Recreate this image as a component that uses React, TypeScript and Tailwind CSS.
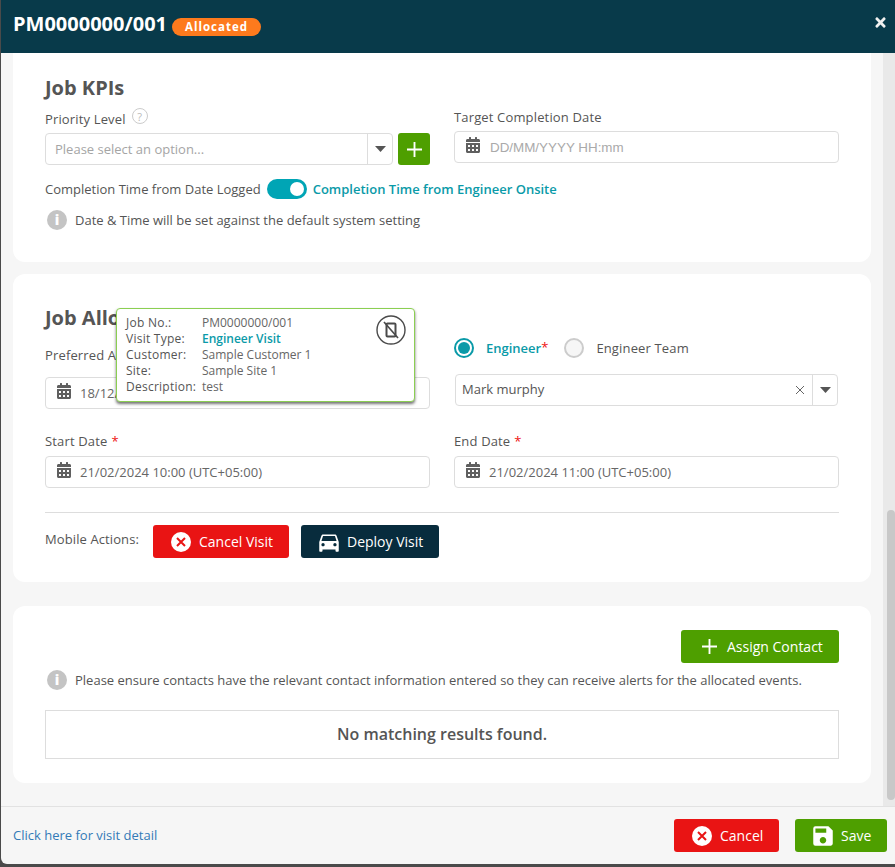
import { FaCalendarAlt, FaTimes } from 'react-icons/fa';
import { MdDirectionsCar, MdSave } from 'react-icons/md';

const Caret = () => (
  <svg width="11" height="6" viewBox="0 0 11 6">
    <polygon points="0,0 11,0 5.5,6" fill="#555555" />
  </svg>
);

const InfoIcon = () => (
  <span className="flex h-5 w-5 shrink-0 items-center justify-center rounded-full bg-[#c4c4c4] text-[14px] font-extrabold leading-none text-white">
    i
  </span>
);

const CancelIcon = () => (
  <svg width="20" height="20" viewBox="0 0 20 20" className="shrink-0">
    <circle cx="10" cy="10" r="10" fill="#ffffff" />
    <path d="M6 6 L14 14 M14 6 L6 14" stroke="#e91414" strokeWidth="2" />
  </svg>
);

const PlusIcon = ({ size }: { size: number }) => (
  <svg width={size} height={size} viewBox="0 0 16 16" className="shrink-0">
    <path d="M8 0 V16 M0 8 H16" stroke="#ffffff" strokeWidth="2" />
  </svg>
);

const NoMobileIcon = () => (
  <svg width="30" height="30" viewBox="0 0 30 30" className="shrink-0">
    <circle cx="15" cy="15" r="14" fill="none" stroke="#4a4a4a" strokeWidth="1.4" />
    <rect x="10.5" y="8.5" width="9" height="13" rx="1" fill="none" stroke="#4a4a4a" strokeWidth="2" />
    <path d="M8 7 L22 23" stroke="#4a4a4a" strokeWidth="1.6" />
  </svg>
);

const DateInput = ({ value, placeholder }: { value?: string; placeholder?: string }) => (
  <div className="flex h-8 items-center rounded border border-[#dddddd] bg-white pl-[10px]">
    <FaCalendarAlt className="mb-[5px] h-4 w-4 shrink-0 text-[#5f5f5f]" />
    {value ? (
      <span className="ml-2 pt-px text-[13px] text-[#666666]">{value}</span>
    ) : (
      <span className="ml-[9px] pt-[3px] font-['Liberation_Sans',sans-serif] text-[13.4px] text-[#aaaaaa]">{placeholder}</span>
    )}
  </div>
);

const Required = () => <span className="text-[#ee1111]">*</span>;

const Card = ({ children, className }: { children: React.ReactNode; className: string }) => (
  <section className={`relative bg-white px-8 ${className}`}>{children}</section>
);

const App = () => {
  return (
    <div className="flex h-[867px] w-[895px] flex-col overflow-hidden bg-[#4a4a4a] pb-[3px] pl-px font-['Open_Sans',sans-serif] text-[13px] text-[#555555]">
      <header className="flex h-[53px] shrink-0 items-center justify-between bg-[#083a4a] pb-[5px] pl-3 pr-[7px]">
        <div className="flex items-center">
          <h1 className="text-[20px] font-bold leading-[28px] text-white">PM0000000/001</h1>
          <span className="ml-[5px] mt-[5px] flex h-[18px] w-[89px] items-center justify-center rounded-full bg-[#fd7a1d] text-[11.5px] font-bold tracking-[1px] text-white">
            Allocated
          </span>
        </div>
        <FaTimes className="mb-[3px] h-[15px] w-[15px] text-[#f0f0f0]" />
      </header>

      <div className="flex min-h-0 flex-1 bg-[#f6f6f6]">
        <div className="w-[882px] overflow-hidden px-3">
          {/* Job KPIs */}
          <Card className="rounded-b-xl pb-8 pt-[21px]">
            <h2 className="h-7 text-[20px] font-bold leading-7 text-[#555555]">Job KPIs</h2>
            <div className="mt-[5px] grid grid-cols-2 gap-6">
              <div>
                <div className="mb-[2px] flex h-6 items-center pt-px font-medium tracking-[0.15px]">
                  Priority Level
                  <span className="mb-[7px] ml-[6px] flex h-4 w-4 items-center justify-center rounded-full border border-[#cccccc] text-[11px] font-normal leading-none text-[#bbbbbb]">
                    ?
                  </span>
                </div>
                <div className="flex gap-[5px]">
                  <div className="flex h-8 flex-1 items-center rounded border border-[#dddddd]">
                    <span className="flex-1 pl-[9px] pt-px text-[#a5a5a5]">Please select an option...</span>
                    <span className="flex h-full w-[25px] items-center justify-center border-l border-[#dddddd]">
                      <Caret />
                    </span>
                  </div>
                  <button className="flex h-8 w-8 items-center justify-center rounded-[3px] bg-[#4e9f00]">
                    <PlusIcon size={15} />
                  </button>
                </div>
              </div>
              <div>
                <div className="mb-1 flex h-5 items-center pt-px font-medium tracking-[0.15px]">Target Completion Date</div>
                <DateInput placeholder="DD/MM/YYYY HH:mm" />
              </div>
            </div>
            <div className="mt-3 flex h-6 items-center">
              <span className="pt-px">Completion Time from Date Logged</span>
              <span className="ml-[6px] flex h-5 w-10 items-center justify-end rounded-full bg-[#00a5b5] pr-[3px]">
                <span className="h-[14px] w-[14px] rounded-full bg-white" />
              </span>
              <span className="ml-[6px] pt-px font-semibold text-[#0a9aa8]">Completion Time from Engineer Onsite</span>
            </div>
            <div className="ml-[2px] mt-[9px] flex h-5 items-center gap-2">
              <InfoIcon />
              <span className="pt-[2px]">Date &amp; Time will be set against the default system setting</span>
            </div>
          </Card>

          {/* Job Allocation */}
          <Card className="mt-3 rounded-xl pb-6 pt-[30px]">
            <h2 className="h-7 text-[20px] font-bold leading-7">Job Allocation</h2>
            <div className="grid grid-cols-2 gap-x-6">
              <div className="pt-[13px]">
                <div className="mb-3 flex h-5 items-center pt-px font-medium tracking-[0.15px]">Preferred Appointment</div>
                <DateInput value="18/12/2023 10:00 (UTC+05:00)" />
              </div>
              <div className="pt-[6px]">
                <div className="mb-4 flex h-5 items-center">
                  <span className="flex h-5 w-5 items-center justify-center rounded-full border-2 border-[#0a9aa8]">
                    <span className="h-3 w-3 rounded-full bg-[#0a9aa8]" />
                  </span>
                  <span className="ml-3 pt-px font-semibold text-[#0a9aa8]">Engineer</span>
                  <Required />
                  <span className="ml-4 h-5 w-5 rounded-full border-2 border-[#cccccc] bg-[#f6f6f6]" />
                  <span className="ml-3 pt-px font-medium tracking-[0.15px]">Engineer Team</span>
                </div>
                <div className="mx-px flex h-8 items-center rounded border border-[#dddddd]">
                  <span className="flex-1 pl-[6px] text-[#555555]">Mark murphy</span>
                  <svg width="10" height="10" viewBox="0 0 10 10" className="mr-[7px]">
                    <path d="M1 1 L9 9 M9 1 L1 9" stroke="#666666" strokeWidth="1" />
                  </svg>
                  <span className="flex h-full w-[25px] items-center justify-center border-l border-[#dddddd]">
                    <Caret />
                  </span>
                </div>
              </div>
              <div className="mt-[22px]">
                <div className="mb-[5px] flex h-5 items-center gap-1 pt-px font-medium tracking-[0.15px]">
                  Start Date <Required />
                </div>
                <DateInput value="21/02/2024 10:00 (UTC+05:00)" />
              </div>
              <div className="mt-[22px]">
                <div className="mb-[5px] flex h-5 items-center gap-1 pt-px font-medium tracking-[0.15px]">
                  End Date <Required />
                </div>
                <DateInput value="21/02/2024 11:00 (UTC+05:00)" />
              </div>
            </div>
            <hr className="mt-6 border-[#dddddd]" />
            <div className="mt-3 flex items-center">
              <span className="mb-1 w-[108px] font-medium tracking-[0.1px]">Mobile Actions:</span>
              <button className="flex h-[33px] w-[136px] items-center gap-2 rounded-[3px] bg-[#e91414] pl-[18px] text-[14px] text-white">
                <CancelIcon />
                Cancel Visit
              </button>
              <button className="ml-3 flex h-[33px] w-[138px] items-center gap-2 rounded-[3px] bg-[#082c3d] pl-[18px] text-[14px] text-white">
                <MdDirectionsCar className="-m-[3px] h-[26px] w-[26px] shrink-0" />
                Deploy Visit
              </button>
            </div>

            <div className="absolute left-[103px] top-[34px] flex h-[94px] w-[299px] justify-between rounded border border-[#8bcf52] bg-white pl-[9px] pr-2 pt-[6px] text-[12px] leading-4 shadow-[0_2px_3px_rgba(0,0,0,0.55)]">
              <div className="grid grid-cols-[76px_1fr] content-start">
                <span className="tracking-[0.25px]">Job No.:</span>
                <span className="text-[#666666]">PM0000000/001</span>
                <span className="tracking-[0.25px]">Visit Type:</span>
                <span className="font-semibold text-[#0a9aa8]">Engineer Visit</span>
                <span className="tracking-[0.25px]">Customer:</span>
                <span className="text-[#666666]">Sample Customer 1</span>
                <span className="tracking-[0.25px]">Site:</span>
                <span className="text-[#666666]">Sample Site 1</span>
                <span className="tracking-[0.25px]">Description:</span>
                <span className="text-[#666666]">test</span>
              </div>
              <div>
                <NoMobileIcon />
              </div>
            </div>
          </Card>

          {/* Contacts */}
          <Card className="mt-6 rounded-xl pb-6 pt-6">
            <div className="flex justify-end">
              <button className="flex h-[33px] w-[158px] items-center gap-[10px] rounded-[3px] bg-[#4e9f00] pl-[21px] text-[14px] text-white">
                <PlusIcon size={15} />
                Assign Contact
              </button>
            </div>
            <div className="ml-[2px] mt-[7px] flex h-5 items-center gap-2">
              <InfoIcon />
              <span className="pt-[2px]">Please ensure contacts have the relevant contact information entered so they can receive alerts for the allocated events.</span>
            </div>
            <div className="mt-5 flex h-[49px] items-center justify-center border border-[#dddddd] pb-px text-[16px] font-semibold">
              No matching results found.
            </div>
          </Card>
        </div>

        <div className="w-3 bg-[#e9e9e9] pl-1 pt-[457px]">
          <div className="h-[290px] rounded-full bg-[#c8c8c8]" />
        </div>
      </div>

      <footer className="flex h-[58px] shrink-0 items-center justify-between rounded-bl-md border-t border-[#e2e2e2] bg-[#f6f6f6] pl-3 pr-2">
        <a className="text-[#337ab7]">Click here for visit detail</a>
        <div className="flex gap-4">
          <button className="flex h-[33px] w-[105px] items-center gap-2 rounded-[3px] bg-[#e91414] pl-[18px] text-[14px] text-white">
            <CancelIcon />
            Cancel
          </button>
          <button className="flex h-[33px] w-[92px] items-center gap-2 rounded-[3px] bg-[#4e9f00] pl-[18px] text-[14px] text-white">
            <MdSave className="-m-[3px] h-[26px] w-[26px] shrink-0" />
            Save
          </button>
        </div>
      </footer>
    </div>
  );
};

export default App;
